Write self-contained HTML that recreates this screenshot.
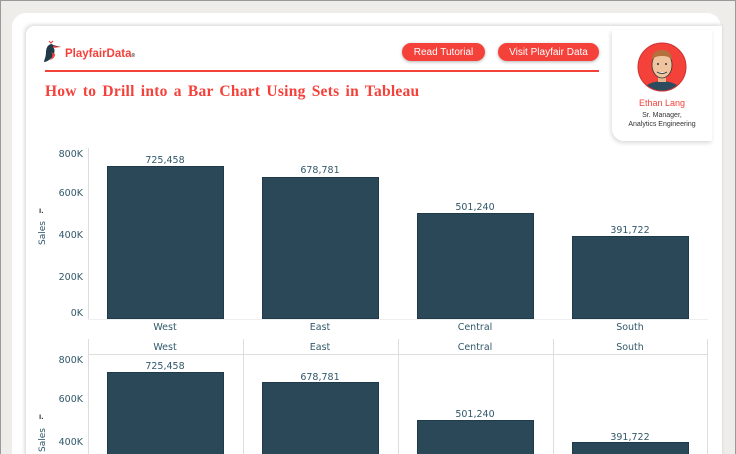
<!DOCTYPE html>
<html><head><meta charset="utf-8"><style>
*{margin:0;padding:0;box-sizing:border-box}
html,body{width:736px;height:454px;overflow:hidden}
body{background:#eeede9;font-family:"DejaVu Sans","Liberation Sans",sans-serif;position:relative}
.a{position:absolute}
.frame{left:0;top:0;width:736px;height:454px;border:1px solid #999;border-bottom:none;z-index:50;pointer-events:none}
.outer{left:12px;top:13px;width:709px;height:460px;background:#fff;border-radius:14px}
.inner{left:26px;top:26px;width:696px;height:440px;background:#fff;border-radius:8px 0 0 0;box-shadow:-1px -1px 4px rgba(0,0,0,.18)}
.btn{top:43px;height:18px;background:#f4413a;color:#fff;border-radius:9px;font:10px "Liberation Sans",sans-serif;text-align:center;line-height:19px;box-shadow:0 1px 3px rgba(0,0,0,.3)}
.bar{background:#2b4858;border:1px solid #1f3a49}
.t{font-size:9.5px;color:#31586a;text-align:center;width:80px;margin-top:1px}
.y{font-size:9.5px;color:#31586a;text-align:right;width:40px;left:43px;margin-top:1px}
.vl{width:1px;background:#ddd}
</style></head><body>
<div class="a frame"></div>
<div class="a outer"></div>
<div class="a inner"></div>
<svg class="a" style="left:44px;top:40px" width="18" height="24" viewBox="0 0 18 24"><path d="M5 1l2 2 2-2" stroke="#e33" fill="none" stroke-width="1"/><path d="M8 4c-4 0-6 4-6 8 0 5-2 8-2 10 3 0 7-3 9-6 2-4 2-7 0-9l8 0-8-2z" fill="#213a48"/><path d="M9 6l8 1-8 1z" fill="#f4413a"/><path d="M7 12c2 2 2 5-1 8 3-1 5-3 5-6z" fill="#f4413a"/></svg>
<div class="a" style="left:65px;top:48px;font:bold 11.5px 'Liberation Sans',sans-serif;color:#f4413a">PlayfairData<span style="font-size:5px;color:#333">®</span></div>
<div class="a btn" style="left:402px;width:83px">Read Tutorial</div>
<div class="a btn" style="left:498px;width:101px">Visit Playfair Data</div>
<div class="a" style="left:45px;top:70px;width:554px;height:2px;background:#f4413a"></div>
<div class="a" style="left:45px;top:83px;font:bold 15.5px 'Liberation Serif',serif;color:#f4413a;letter-spacing:.25px;word-spacing:2px">How to Drill into a Bar Chart Using Sets in Tableau</div>
<div class="a" style="left:612px;top:30px;width:100px;height:111px;background:#fff;border-radius:0 0 0 12px;box-shadow:-1px 2px 4px rgba(0,0,0,.15)"></div>
<svg class="a" style="left:637px;top:42px" width="50" height="50" viewBox="0 0 50 50"><circle cx="25" cy="25" r="24" fill="#f4413a" stroke="#c33" stroke-width="1"/><clipPath id="c"><circle cx="25" cy="25" r="23.5"/></clipPath><g clip-path="url(#c)"><path d="M6 50c2-8 8-10 19-11 11 1 17 3 19 11z" fill="#2c4b5e"/><rect x="21" y="32" width="8" height="8" fill="#e8b58f"/><ellipse cx="25" cy="23" rx="10" ry="13" fill="#f0c49f" stroke="#333" stroke-width=".8"/><path d="M15 18c0-8 5-10 10-10s10 2 10 10c-3-4-7-4-10-4s-7 0-10 4z" fill="#b5703d"/><path d="M20 30q5 3 10 0" stroke="#333" fill="#fff"/><circle cx="21" cy="22" r="1" fill="#333"/><circle cx="29" cy="22" r="1" fill="#333"/></g></svg>
<div class="a" style="left:612px;top:98px;width:100px;text-align:center;font:9px 'Liberation Sans',sans-serif;color:#f4413a">Ethan Lang</div>
<div class="a" style="left:612px;top:111px;width:100px;text-align:center;font:7px/9px 'Liberation Sans',sans-serif;color:#333">Sr. Manager,<br>Analytics Engineering</div>

<div class="a vl" style="left:88px;top:148px;height:172px"></div>
<div class="a" style="left:88px;top:319px;width:620px;height:1px;background:#eee"></div>
<div class="a y" style="top:148px">800K</div>
<div class="a y" style="top:187px">600K</div>
<div class="a y" style="top:229px">400K</div>
<div class="a y" style="top:271px">200K</div>
<div class="a y" style="top:307px">0K</div>
<div class="a" style="left:38px;top:245px;transform:rotate(-90deg);transform-origin:0 0;font-size:9px;color:#31586a">Sales</div>
<div class="a" style="left:39px;top:206px;font:bold 8px sans-serif;color:#333">ı.</div>
<div class="a bar" style="left:107px;top:166px;width:117px;height:153px"></div>
<div class="a bar" style="left:262px;top:177px;width:117px;height:142px"></div>
<div class="a bar" style="left:417px;top:213px;width:117px;height:106px"></div>
<div class="a bar" style="left:572px;top:236px;width:117px;height:83px"></div>
<div class="a t" style="left:125px;top:154px">725,458</div>
<div class="a t" style="left:280px;top:164px">678,781</div>
<div class="a t" style="left:435px;top:201px">501,240</div>
<div class="a t" style="left:590px;top:224px">391,722</div>
<div class="a t" style="left:125px;top:321px">West</div>
<div class="a t" style="left:280px;top:321px">East</div>
<div class="a t" style="left:435px;top:321px">Central</div>
<div class="a t" style="left:590px;top:321px">South</div>

<div class="a vl" style="left:88px;top:339px;height:120px"></div>
<div class="a vl" style="left:243px;top:339px;height:120px"></div>
<div class="a vl" style="left:398px;top:339px;height:120px"></div>
<div class="a vl" style="left:553px;top:339px;height:120px"></div>
<div class="a vl" style="left:707px;top:339px;height:120px"></div>
<div class="a" style="left:88px;top:354px;width:620px;height:1px;background:#ddd"></div>
<div class="a t" style="left:125px;top:341px">West</div>
<div class="a t" style="left:280px;top:341px">East</div>
<div class="a t" style="left:435px;top:341px">Central</div>
<div class="a t" style="left:590px;top:341px">South</div>
<div class="a y" style="top:354px">800K</div>
<div class="a y" style="top:393px">600K</div>
<div class="a y" style="top:436px">400K</div>
<div class="a" style="left:38px;top:452px;transform:rotate(-90deg);transform-origin:0 0;font-size:9px;color:#31586a">Sales</div>
<div class="a" style="left:39px;top:412px;font:bold 8px sans-serif;color:#333">ı.</div>
<div class="a bar" style="left:107px;top:372px;width:117px;height:90px"></div>
<div class="a bar" style="left:262px;top:382px;width:117px;height:80px"></div>
<div class="a bar" style="left:417px;top:420px;width:117px;height:40px"></div>
<div class="a bar" style="left:572px;top:442px;width:117px;height:20px"></div>
<div class="a t" style="left:125px;top:360px">725,458</div>
<div class="a t" style="left:280px;top:371px">678,781</div>
<div class="a t" style="left:435px;top:408px">501,240</div>
<div class="a t" style="left:590px;top:431px">391,722</div>
</body></html>
